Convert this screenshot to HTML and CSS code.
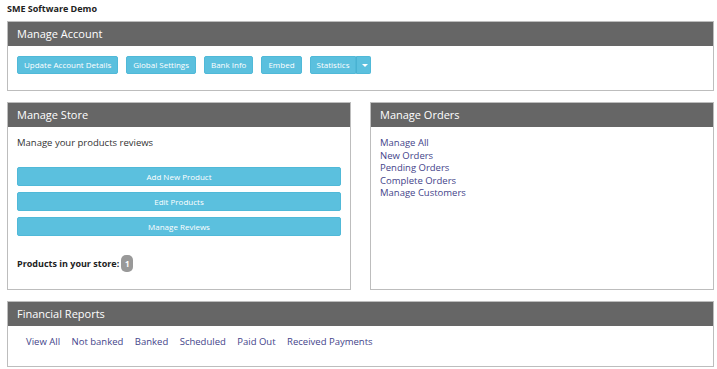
FILE: index.html
```html
<!DOCTYPE html>
<html lang="en">

<head>
    <meta charset="UTF-8">
    <meta name="viewport" content="width=device-width, initial-scale=1.0">
    <title>SME Software Demo</title>
    <link rel="stylesheet" href="styles.css">
</head>

<body>
    <div class="wrap">
        <h1 class="site_title">SME Software Demo</h1>

        <div class="panel">
            <div class="panel_head">Manage Account</div>
            <div class="panel_body account_body">
                <a class="btn" href="#">Update Account Details</a>
                <a class="btn" href="#">Global Settings</a>
                <a class="btn" href="#">Bank Info</a>
                <a class="btn" href="#">Embed</a>
                <div class="btn_group">
                    <a class="btn btn_main" href="#">Statistics</a>
                    <a class="btn btn_caret" href="#"><span class="caret"></span></a>
                </div>
            </div>
        </div>

        <div class="two_cols">
            <div class="panel">
                <div class="panel_head">Manage Store</div>
                <div class="panel_body store_body">
                    <p class="intro">Manage your products reviews</p>
                    <div class="store_btns">
                        <a class="btn btn_block" href="#">Add New Product</a>
                        <a class="btn btn_block" href="#">Edit Products</a>
                        <a class="btn btn_block" href="#">Manage Reviews</a>
                    </div>
                    <p class="count">Products in your store: <span class="badge">1</span></p>
                </div>
            </div>

            <div class="panel">
                <div class="panel_head">Manage Orders</div>
                <div class="panel_body orders_body">
                    <a href="#">Manage All</a>
                    <a href="#">New Orders</a>
                    <a href="#">Pending Orders</a>
                    <a href="#">Complete Orders</a>
                    <a href="#">Manage Customers</a>
                </div>
            </div>
        </div>

        <div class="panel">
            <div class="panel_head">Financial Reports</div>
            <div class="panel_body reports_body">
                <a href="#">View All</a>
                <a href="#">Not banked</a>
                <a href="#">Banked</a>
                <a href="#">Scheduled</a>
                <a href="#">Paid Out</a>
                <a href="#">Received Payments</a>
            </div>
        </div>
    </div>
</body>

</html>
```

FILE: styles.css
```css
* {
    margin: 0;
    padding: 0;
    box-sizing: border-box;
}

body {
    font-family: "Open Sans", "DejaVu Sans", sans-serif;
    color: #333;
    background: #fff;
}

.wrap {
    padding: 2px 3px 0 7px;
}

.site_title {
    font-size: 9px;
    font-weight: 700;
    color: #222;
    line-height: 13px;
    margin-bottom: 6px;
}

.panel {
    border: 1px solid #bdbdbd;
    margin-bottom: 11px;
}

.panel_head {
    background: #666;
    color: #fff;
    font-size: 11px;
    height: 24px;
    line-height: 23px;
    padding: 0 9px;
}

.panel_body {
    padding: 10px 9px;
}

.account_body {
    display: flex;
    gap: 8px;
    height: 44px;
}

.btn {
    display: inline-block;
    background: #5bc0de;
    border: 1px solid #50b9d8;
    border-radius: 2px;
    color: #fff;
    font-size: 8px;
    text-decoration: none;
    height: 18px;
    line-height: 16px;
    padding: 0 6px;
    text-align: center;
}

.btn_group {
    display: flex;
}

.btn_main {
    border-radius: 2px 0 0 2px;
}

.btn_caret {
    border-left: 1px solid #49b2d2;
    border-radius: 0 2px 2px 0;
    width: 15px;
    padding: 0;
    position: relative;
}

.caret {
    position: absolute;
    left: 5px;
    top: 7px;
    border-left: 3px solid transparent;
    border-right: 3px solid transparent;
    border-top: 3px solid #fff;
}

.two_cols {
    display: grid;
    grid-template-columns: 1fr 1fr;
    gap: 19px;
}

.store_body {
    height: 162px;
}

.intro {
    font-size: 9.5px;
    line-height: 12px;
}

.store_btns {
    margin-top: 18px;
    display: flex;
    flex-direction: column;
    gap: 6px;
}

.btn_block {
    display: block;
    height: 19px;
    line-height: 17px;
}

.count {
    margin-top: 19px;
    font-size: 9px;
    font-weight: 700;
    color: #222;
    display: flex;
    align-items: center;
    gap: 2px;
}

.badge {
    display: inline-block;
    background: #999;
    color: #fff;
    font-size: 8px;
    border-radius: 5px;
    width: 12px;
    height: 17px;
    line-height: 17px;
    text-align: center;
}

.orders_body {
    display: flex;
    flex-direction: column;
}

.orders_body a,
.reports_body a {
    color: #44448a;
    text-decoration: none;
    font-size: 9.5px;
    line-height: 12.5px;
}

.reports_body {
    display: flex;
    gap: 11.5px;
    padding: 10px 18px;
    height: 40px;
}
```
